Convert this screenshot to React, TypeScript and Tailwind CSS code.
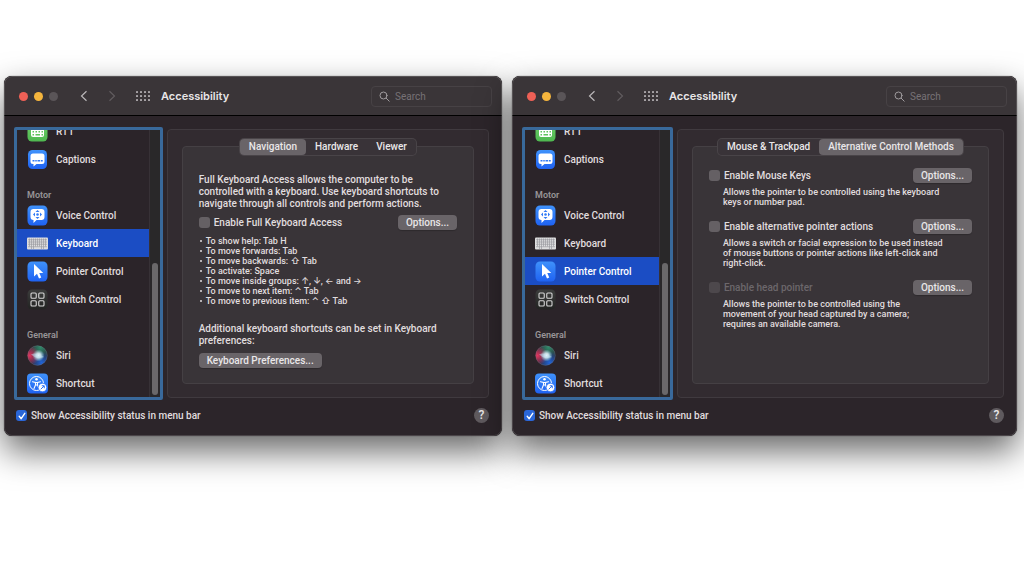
import type { ReactNode } from "react";

type IconName =
  | "rtt"
  | "captions"
  | "voice"
  | "keyboard"
  | "pointer"
  | "switch"
  | "siri"
  | "shortcut";

type Entry = { label: string; icon?: IconName };

const entries: Entry[] = [
  { label: "RTT", icon: "rtt" },
  { label: "Captions", icon: "captions" },
  { label: "Motor" },
  { label: "Voice Control", icon: "voice" },
  { label: "Keyboard", icon: "keyboard" },
  { label: "Pointer Control", icon: "pointer" },
  { label: "Switch Control", icon: "switch" },
  { label: "General" },
  { label: "Siri", icon: "siri" },
  { label: "Shortcut", icon: "shortcut" },
];

const Gradients = () => (
  <svg width="0" height="0" className="absolute" aria-hidden="true">
    <defs>
      <linearGradient id="blue" x1="0" y1="0" x2="0" y2="1">
        <stop offset="0" stopColor="#3f92fb" />
        <stop offset="1" stopColor="#1f62f2" />
      </linearGradient>
      <linearGradient id="green" x1="0" y1="0" x2="0" y2="1">
        <stop offset="0" stopColor="#6fd06a" />
        <stop offset="1" stopColor="#4fb850" />
      </linearGradient>
      <linearGradient id="dark" x1="0" y1="0" x2="0" y2="1">
        <stop offset="0" stopColor="#3c3d3c" />
        <stop offset="1" stopColor="#222322" />
      </linearGradient>
      <radialGradient id="siri-red" cx="0.1" cy="0.5" r="0.5">
        <stop offset="0" stopColor="#e2355f" />
        <stop offset="1" stopColor="#e2355f" stopOpacity="0" />
      </radialGradient>
      <radialGradient id="siri-green" cx="0.65" cy="0.1" r="0.55">
        <stop offset="0" stopColor="#2f8a68" />
        <stop offset="1" stopColor="#2f8a68" stopOpacity="0" />
      </radialGradient>
      <radialGradient id="siri-blue" cx="0.7" cy="0.85" r="0.55">
        <stop offset="0" stopColor="#1f63d6" />
        <stop offset="1" stopColor="#1f63d6" stopOpacity="0" />
      </radialGradient>
      <radialGradient id="siri-core" cx="0.55" cy="0.5" r="0.3">
        <stop offset="0" stopColor="#ffffff" />
        <stop offset="0.4" stopColor="#d8f0f2" stopOpacity="0.85" />
        <stop offset="1" stopColor="#9fe0e8" stopOpacity="0" />
      </radialGradient>
    </defs>
  </svg>
);

const keyRow = (y: number, xs: number[], size: number) =>
  xs.map((x) => (
    <rect key={`${x}-${y}`} x={x} y={y} width={size} height={size} />
  ));

const Icon = ({ name }: { name: IconName }) => (
  <svg viewBox="0 0 42 42" className="size-[21px] shrink-0" aria-hidden="true">
    {name === "rtt" && (
      <>
        <rect x="1" y="1" width="40" height="40" rx="9" fill="url(#green)" />
        <rect x="8" y="8" width="26" height="24" rx="4" fill="#fff" />
        <g fill="#5fc45d">
          {keyRow(14, [11, 17, 23, 29], 3)}
          {keyRow(20, [11, 17, 23, 29], 3)}
          <rect x="11" y="26" width="3" height="3" />
          <rect x="17" y="26" width="9" height="3" />
          <rect x="29" y="26" width="3" height="3" />
        </g>
      </>
    )}
    {name === "captions" && (
      <>
        <rect x="2" y="2" width="38" height="38" rx="9" fill="url(#blue)" />
        <path
          d="M12 9h18a5 5 0 0 1 5 5v11a5 5 0 0 1-5 5H19l-6 5v-5h-1a5 5 0 0 1-5-5V14a5 5 0 0 1 5-5z"
          fill="#fff"
        />
        <path
          d="M11 23.500h4M16.500 23.500h3M21 23.500h5M27.500 23.500h4"
          stroke="#2f78f6"
          strokeWidth="3"
        />
      </>
    )}
    {name === "voice" && (
      <>
        <rect x="1" y="1" width="40" height="40" rx="9" fill="url(#blue)" />
        <path
          d="M13 8h16a6 6 0 0 1 6 6v10a6 6 0 0 1-6 6H19l-6 6v-6a6 6 0 0 1-6-6V14a6 6 0 0 1 6-6z"
          fill="#fff"
        />
        <g fill="#2f7af6">
          <path d="M21 10l4 4h-8zM21 28l4-4h-8zM12 19l4-4v8zM30 19l-4-4v8z" />
          <circle cx="21" cy="19" r="2.5" />
        </g>
      </>
    )}
    {name === "keyboard" && (
      <>
        <rect x="0" y="9" width="42" height="24" rx="2" fill="#dededf" />
        <g fill="none" stroke="#96969c" strokeWidth="1.300">
          <path d="M2 13.500h38M2 18h38M2 22.500h38M2 27.500h38" />
          <path d="M5 11v16M9 11v16M13 11v21M17 11v16M21 11v16M25 11v16M29 11v21M33 11v16M37 11v16M9 27v5M33 27v5" />
        </g>
      </>
    )}
    {name === "pointer" && (
      <>
        <rect x="1" y="1" width="40" height="40" rx="9" fill="url(#blue)" />
        <path d="M14 6v25l6-5.500 4 9.500 4.500-2-4-9h8z" fill="#fff" />
      </>
    )}
    {name === "switch" && (
      <>
        <rect x="1" y="1" width="40" height="40" rx="9" fill="url(#dark)" />
        <g fill="none" stroke="#d6d6d6" strokeWidth="2.200">
          <rect x="8" y="8" width="10.500" height="10.500" rx="2" />
          <rect x="23.500" y="8" width="10.500" height="10.500" rx="2" />
          <rect x="8" y="23.500" width="10.500" height="10.500" rx="2" />
          <rect x="23.500" y="23.500" width="10.500" height="10.500" rx="2" />
        </g>
      </>
    )}
    {name === "siri" && (
      <>
        <circle cx="21" cy="21" r="20" fill="#2a2b3c" />
        <circle cx="21" cy="21" r="20" fill="url(#siri-green)" />
        <circle cx="21" cy="21" r="20" fill="url(#siri-blue)" />
        <circle cx="21" cy="21" r="20" fill="url(#siri-red)" />
        <circle cx="21" cy="21" r="20" fill="url(#siri-core)" />
        <path
          d="M8 19c8-4 15-1 26 5-9 3-17 3-26-5z"
          fill="#bfe4f5"
          opacity="0.5"
        />
        <circle
          cx="21"
          cy="21"
          r="19.500"
          fill="none"
          stroke="#8c8c96"
          strokeOpacity="0.5"
        />
      </>
    )}
    {name === "shortcut" && (
      <>
        <rect x="0" y="1" width="42" height="40" rx="8" fill="url(#blue)" />
        <circle
          cx="19"
          cy="21"
          r="14"
          fill="none"
          stroke="#fff"
          strokeWidth="2"
        />
        <circle cx="19" cy="12.500" r="2.500" fill="#fff" />
        <path
          d="M11 17.500l6 1.500v5l-3 7M27 17.500l-6 1.500v5l3 7M17 19h4v5h-4z"
          fill="none"
          stroke="#fff"
          strokeWidth="2.200"
          strokeLinecap="round"
        />
        <circle
          cx="31"
          cy="29"
          r="8.500"
          fill="#fff"
          stroke="#2b72f5"
          strokeWidth="1.500"
        />
        <path
          d="M27.500 32.500l6.500-6.500M29.500 25.500h5v5"
          fill="none"
          stroke="#2b72f5"
          strokeWidth="2"
        />
      </>
    )}
  </svg>
);

const Checkbox = ({
  label,
  checked,
  disabled,
}: {
  label: string;
  checked?: boolean;
  disabled?: boolean;
}) => (
  <label
    className={`flex items-center gap-1 leading-3 ${disabled ? "text-[#6c676b]" : ""}`}
  >
    <span className="grid size-[11px] shrink-0 place-items-center">
      <input
        type="checkbox"
        defaultChecked={checked}
        disabled={disabled}
        className="peer col-start-1 row-start-1 size-[11px] appearance-none rounded-[3px] bg-[#656064] checked:bg-[#2a66d8] disabled:bg-[#4d484c]"
      />
      <svg
        viewBox="0 0 10 10"
        className="pointer-events-none invisible col-start-1 row-start-1 size-[10px] peer-checked:visible"
        aria-hidden="true"
      >
        <path
          d="M2.200 5.300l2 2.400L7.800 2.300"
          fill="none"
          stroke="#fff"
          strokeWidth="1.400"
          strokeLinecap="round"
          strokeLinejoin="round"
        />
      </svg>
    </span>
    {label}
  </label>
);

const PushButton = ({ children }: { children: ReactNode }) => (
  <button
    type="button"
    className="h-[15px] shrink-0 rounded-[4px] bg-[#696468] px-2 leading-[15px] text-[#e9e7e8] shadow-[0_1px_1px_rgba(0,0,0,0.2)]"
  >
    {children}
  </button>
);

const TitleBar = () => (
  <header className="flex h-10 items-center border-b border-black bg-[#3a3538] pt-[1px] pr-[10px] pl-[15px]">
    <div className="flex gap-[6px]">
      <span className="size-[9px] rounded-full bg-[#ee6056]" />
      <span className="size-[9px] rounded-full bg-[#f5b53d]" />
      <span className="size-[9px] rounded-full bg-[#5a5558]" />
    </div>
    <nav className="ml-[22px] flex items-center gap-5">
      <button type="button" aria-label="Back" className="text-[#b9b6b8]">
        <svg viewBox="0 0 8 12" className="h-3 w-2" fill="none">
          <path d="M6.500 1.200L1.500 6l5 4.800" stroke="currentColor" strokeWidth="1.200" />
        </svg>
      </button>
      <button type="button" aria-label="Forward" className="text-[#615c5f]">
        <svg viewBox="0 0 8 12" className="h-3 w-2" fill="none">
          <path d="M1.500 1.200l5 4.800-5 4.800" stroke="currentColor" strokeWidth="1.200" />
        </svg>
      </button>
      <button type="button" aria-label="Show All" className="text-[#a5a1a4]">
        <svg viewBox="0 0 14 10" className="h-[10px] w-[14px]" fill="currentColor">
          {[0, 4, 8, 12].map((x) =>
            [0, 4, 8].map((y) => (
              <rect key={`${x}-${y}`} x={x} y={y} width="2" height="2" rx="0.500" />
            )),
          )}
        </svg>
      </button>
    </nav>
    <h1 className="ml-[11px] font-['Inter',sans-serif] text-[11px] font-semibold text-[#e8e6e7]">
      Accessibility
    </h1>
    <label className="ml-auto flex h-[21px] w-[121px] items-center gap-[5px] rounded-[4px] border border-[#474245] px-[7px]">
      <svg
        viewBox="0 0 11 11"
        className="size-[11px] shrink-0"
        fill="none"
        stroke="#a09c9f"
        strokeLinecap="round"
      >
        <circle cx="4.500" cy="4.500" r="3.500" />
        <path d="M7.200 7.200l3 3" />
      </svg>
      <input
        type="search"
        aria-label="Search"
        placeholder="Search"
        className="min-w-0 flex-1 bg-transparent text-[10px] font-normal outline-none placeholder:text-[#777276]"
      />
    </label>
  </header>
);

const Sidebar = ({ selected }: { selected: string }) => (
  <aside className="flex h-[273px] rounded-[2px] border-3 border-[#39699b] bg-[#2b2429]">
    <ul className="flex min-w-0 flex-1 flex-col justify-end overflow-hidden">
      {entries.map(({ label, icon }) =>
        icon ? (
          <li key={label} className="h-7 shrink-0">
            <button
              type="button"
              className={`flex h-full w-full items-center gap-2 pt-[1px] pl-[10px] ${
                label === selected ? "bg-[#1b4dc4] text-white" : ""
              }`}
            >
              <Icon name={icon} />
              {label}
            </button>
          </li>
        ) : (
          <li
            key={label}
            className="flex h-7 shrink-0 items-end pl-[10px] text-[9px] leading-3 font-semibold text-[#989497]"
          >
            {label}
          </li>
        ),
      )}
    </ul>
    <div className="flex w-[11px] items-end justify-center border-l border-[#373136] bg-[#292829] pb-[2px]">
      <div className="h-1/2 w-[6px] rounded-full bg-[#6a696a]" />
    </div>
  </aside>
);

const Tabs = ({ items, active }: { items: string[]; active: string }) => (
  <div
    role="tablist"
    className="relative z-10 -mb-[9px] flex h-4 self-center rounded-[4px] bg-[#393338] ring-1 ring-[#494448]"
  >
    {items.map((item) => (
      <button
        key={item}
        type="button"
        role="tab"
        aria-selected={item === active}
        className={`rounded-[4px] px-[9px] leading-4 text-[#e9e7e8] ${
          item === active ? "bg-[#696468]" : ""
        }`}
      >
        {item}
      </button>
    ))}
  </div>
);

type WindowProps = {
  selected: string;
  tabs: string[];
  activeTab: string;
  className: string;
  children: ReactNode;
};

const PreferencesWindow = ({
  selected,
  tabs,
  activeTab,
  className,
  children,
}: WindowProps) => (
  <section
    className={`relative min-w-0 overflow-hidden rounded-[8px] bg-[#2c252a] shadow-[0_15px_34px_rgba(0,0,0,0.6),0_0_1px_rgba(0,0,0,0.8)] after:pointer-events-none after:absolute after:inset-0 after:rounded-[8px] after:border after:border-white/15 ${className}`}
  >
    <TitleBar />
    <div className="grid grid-cols-[149fr_323fr] gap-1 pt-[11px] pr-[13px] pl-[10px]">
      <Sidebar selected={selected} />
      <main className="my-[2px] flex min-w-0 flex-col rounded-[4px] border border-[#403a3f] bg-[#322b30] px-[14px] pt-[9px] pb-[13px]">
        <Tabs items={tabs} active={activeTab} />
        <div className="flex-1 rounded-[4px] border border-[#454044] bg-[#393438] px-4">
          {children}
        </div>
      </main>
    </div>
    <footer className="flex items-center justify-between pt-2 pr-[13px] pb-[13px] pl-3">
      <Checkbox label="Show Accessibility status in menu bar" checked />
      <button
        type="button"
        aria-label="Help"
        className="size-[15px] rounded-full bg-[#5f5a5e] text-[12px] leading-[15px] text-[#e9e7e8]"
      >
        ?
      </button>
    </footer>
  </section>
);

const shortcuts = [
  "To show help: Tab H",
  "To move forwards: Tab",
  "To move backwards: ⇧ Tab",
  "To activate: Space",
  "To move inside groups: ↑, ↓, ← and →",
  "To move to next item: ⌃ Tab",
  "To move to previous item: ⌃ ⇧ Tab",
];

const KeyboardPane = () => (
  <div className="pt-[27px]">
    <p className="leading-3">
      Full Keyboard Access allows the computer to be
      <br />
      controlled with a keyboard. Use keyboard shortcuts to
      <br />
      navigate through all controls and perform actions.
    </p>
    <div className="mt-[5px] flex items-center justify-between">
      <Checkbox label="Enable Full Keyboard Access" />
      <PushButton>Options...</PushButton>
    </div>
    <ul className="mt-[6px] text-[9px] leading-[10px]">
      {shortcuts.map((line) => (
        <li key={line} className="flex items-center gap-1 pl-[1px]">
          <span className="size-[2px] rounded-full bg-current" />
          {line}
        </li>
      ))}
    </ul>
    <p className="mt-[17px] mb-[6px] leading-3">
      Additional keyboard shortcuts can be set in Keyboard
      <br />
      preferences:
    </p>
    <PushButton>Keyboard Preferences...</PushButton>
  </div>
);

const pointerOptions = [
  {
    label: "Enable Mouse Keys",
    lines: [
      "Allows the pointer to be controlled using the keyboard",
      "keys or number pad.",
    ],
  },
  {
    label: "Enable alternative pointer actions",
    lines: [
      "Allows a switch or facial expression to be used instead",
      "of mouse buttons or pointer actions like left-click and",
      "right-click.",
    ],
  },
  {
    label: "Enable head pointer",
    disabled: true,
    lines: [
      "Allows the pointer to be controlled using the",
      "movement of your head captured by a camera;",
      "requires an available camera.",
    ],
  },
];

const PointerPane = () => (
  <div className="flex flex-col gap-3 pt-[21px]">
    {pointerOptions.map(({ label, disabled, lines }) => (
      <div key={label}>
        <div className="flex items-center justify-between">
          <Checkbox label={label} disabled={disabled} />
          <PushButton>Options...</PushButton>
        </div>
        <p className="mt-1 pl-[14px] text-[9px] leading-[10px]">
          {lines.map((line) => (
            <span key={line} className="block whitespace-nowrap">
              {line}
            </span>
          ))}
        </p>
      </div>
    ))}
  </div>
);

const App = () => {
  return (
    <div className="flex min-h-screen items-start gap-[10px] bg-white pt-[76px] pr-[7px] pl-1 font-['Roboto','Inter','DejaVu_Sans',sans-serif] text-[10px] font-medium whitespace-nowrap text-[#e0dddf]">
      <Gradients />
      <PreferencesWindow
        selected="Keyboard"
        tabs={["Navigation", "Hardware", "Viewer"]}
        activeTab="Navigation"
        className="flex-[498]"
      >
        <KeyboardPane />
      </PreferencesWindow>
      <PreferencesWindow
        selected="Pointer Control"
        tabs={["Mouse & Trackpad", "Alternative Control Methods"]}
        activeTab="Alternative Control Methods"
        className="flex-[505]"
      >
        <PointerPane />
      </PreferencesWindow>
    </div>
  );
};

export default App;
